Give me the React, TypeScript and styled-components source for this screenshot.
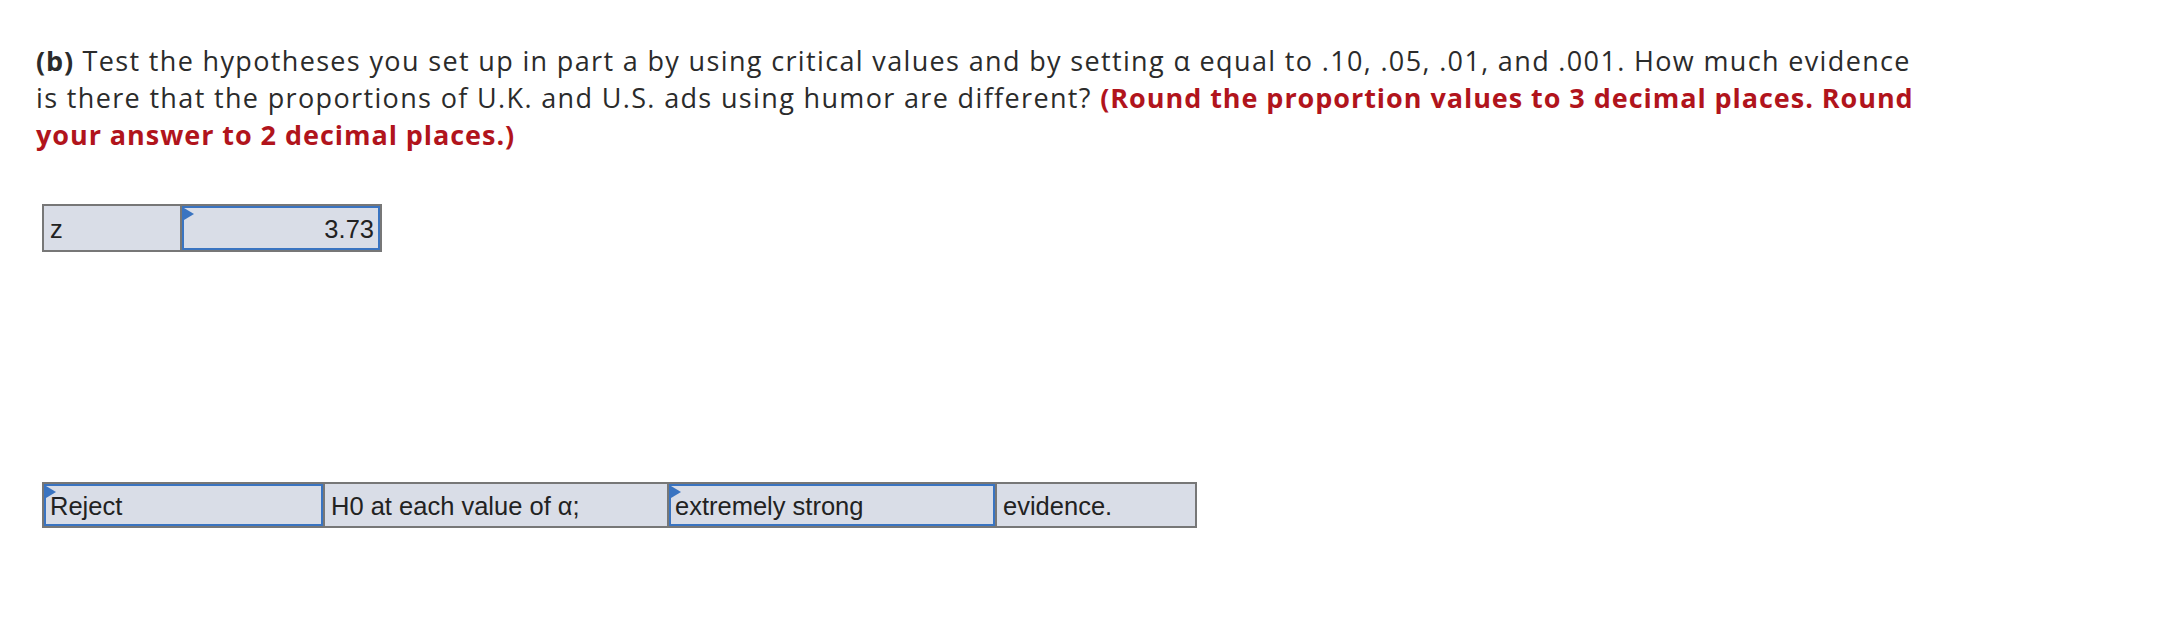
import * as React from "react";
import styled, { createGlobalStyle } from "styled-components";

const GlobalStyle = createGlobalStyle`
  html, body {
    margin: 0;
    padding: 0;
    background: #ffffff;
  }
`;

const Page = styled.div`
  padding: 42px 36px 0 36px;
  font-family: "Open Sans", "Lato", sans-serif;
`;

const Question = styled.p`
  margin: 0;
  font-size: 27px;
  line-height: 37px;
  letter-spacing: 1.35px;
  color: #2b2b2b;
  white-space: nowrap;
`;

const Bold = styled.strong`
  font-weight: 700;
  letter-spacing: 0.9px;
`;

const Hint = styled.strong`
  font-weight: 700;
  letter-spacing: 0.95px;
  color: #b1141c;
`;

const Grid = styled.div<{ top: number }>`
  display: flex;
  width: fit-content;
  margin: ${p => p.top}px 0 0 6px;
  border: 2px solid #777;
  background: #777;
  gap: 2px;
  font-family: "Liberation Sans", Arial, sans-serif;
  font-size: 25.5px;
  color: #222;
`;

const Cell = styled.div<{ w: number; h: number; input?: boolean; right?: boolean }>`
  position: relative;
  box-sizing: border-box;
  width: ${p => p.w}px;
  height: ${p => p.h}px;
  background: #d9dde7;
  display: flex;
  align-items: center;
  justify-content: ${p => (p.right ? "flex-end" : "flex-start")};
  padding: ${p => (p.input ? "3px 4px 0 4px" : "3px 6px 0 6px")};
  white-space: nowrap;
  ${p => p.input && "border: 2px solid #3a74c1;"}
`;

const Marker = styled.span`
  position: absolute;
  top: 0;
  left: 0;
  width: 0;
  height: 0;
  border-top: 6px solid transparent;
  border-bottom: 6px solid transparent;
  border-left: 10px solid #3a74c1;
`;

const App: React.FC = () => (
  <Page>
    <GlobalStyle />
    <Question>
      <Bold>(b)</Bold> Test the hypotheses you set up in part a by using critical values and by setting α equal to .10, .05, .01, and .001. How much evidence
      <br />
      is there that the proportions of U.K. and U.S. ads using humor are different?{" "}
      <Hint>(Round the proportion values to 3 decimal places. Round</Hint>
      <br />
      <Hint>your answer to 2 decimal places.)</Hint>
    </Question>
    <Grid top={51}>
      <Cell w={136} h={44}>z</Cell>
      <Cell w={198} h={44} input right>
        <Marker />
        3.73
      </Cell>
    </Grid>
    <Grid top={230}>
      <Cell w={279} h={42} input>
        <Marker />
        Reject
      </Cell>
      <Cell w={342} h={42}>H0 at each value of α;</Cell>
      <Cell w={326} h={42} input>
        <Marker />
        extremely strong
      </Cell>
      <Cell w={198} h={42}>evidence.</Cell>
    </Grid>
  </Page>
);

export default App;
